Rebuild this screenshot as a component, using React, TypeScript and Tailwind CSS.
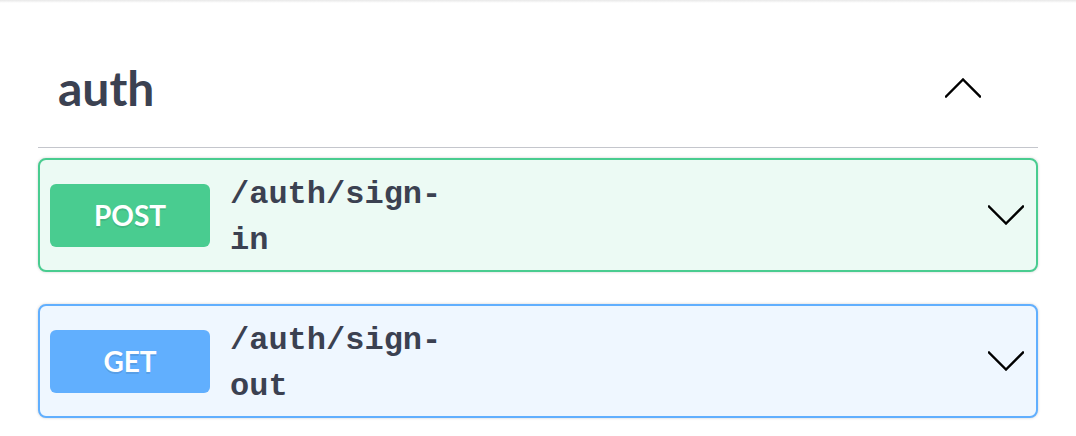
import React from 'react';

const Chevron = ({ up = false }: { up?: boolean }) => (
  <svg width="36" height="20" viewBox="0 0 36 20" fill="none" className="shrink-0">
    <polyline
      points={up ? '1,18.5 18,1.5 35,18.5' : '1,1.5 18,18.5 35,1.5'}
      stroke="#000"
      strokeWidth="2.4"
      strokeLinecap="square"
    />
  </svg>
);

const operations = [
  {
    method: 'POST',
    path: '/auth/sign-in',
    box: 'border-[#49cc90] bg-[#ecfaf4]',
    badge: 'bg-[#49cc90]',
  },
  {
    method: 'GET',
    path: '/auth/sign-out',
    box: 'border-[#61affe] bg-[#eff7ff]',
    badge: 'bg-[#61affe]',
  },
];

const Operation = ({ method, path, box, badge }: (typeof operations)[number]) => (
  <div
    className={`flex items-center h-[114px] rounded-[8px] border-2 pl-[10px] pr-[12px] shadow-[0_0_3px_rgba(0,0,0,0.19)] ${box}`}
  >
    <span
      className={`w-[160px] h-[63px] flex items-center justify-center rounded-[6px] text-white text-[28px] font-bold [text-shadow:0_2px_0_rgba(0,0,0,0.1)] ${badge}`}
      style={{ fontFamily: 'Lato, "Open Sans", sans-serif' }}
    >
      {method}
    </span>
    <span
      className="w-[250px] pl-[20px] pt-[5px] text-[32px] leading-[46px] font-bold text-[#3b4151] flex-none"
      style={{ fontFamily: '"Liberation Mono", monospace' }}
    >
      <span className="block w-[230px]">{path}</span>
    </span>
    <div className="flex-1" />
    <Chevron />
  </div>
);

export default function App() {
  return (
    <div className="w-[1076px] h-[436px] bg-white overflow-hidden">
      <div className="h-[3px] bg-gradient-to-b from-[#e8e8e8] to-white" />
      <div className="px-[38px] pt-[25px]">
        <div className="flex items-center justify-between h-[120px] border-b border-[#c4c6cc] pl-[20px] pr-[57px]">
          <h3
            className="text-[48px] leading-[48px] font-bold text-[#3b4151]"
            style={{ fontFamily: 'Lato, "Open Sans", sans-serif' }}
          >
            auth
          </h3>
          <Chevron up />
        </div>
        <div className="flex flex-col gap-[32px] pt-[10px]">
          {operations.map((op) => (
            <Operation key={op.method} {...op} />
          ))}
        </div>
      </div>
    </div>
  );
}
